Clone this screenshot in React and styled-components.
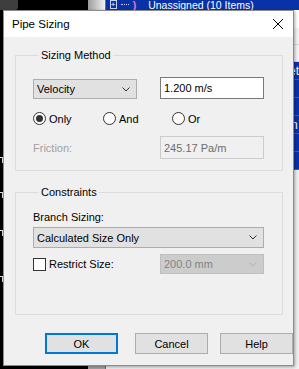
import styled, { createGlobalStyle } from "styled-components";

const GlobalStyle = createGlobalStyle`
  html, body {
    margin: 0;
    padding: 0;
    background: #000;
  }
  body {
    font-family: "Liberation Sans", Arial, sans-serif;
    font-size: 11px;
    color: #000;
  }
  * {
    box-sizing: border-box;
  }
`;

const Desktop = styled.div`
  position: relative;
  width: 299px;
  height: 369px;
  overflow: hidden;
  display: flex;
`;

/* ---------- app behind the dialog ---------- */

const LeftPane = styled.div`
  width: 119px;
  background: #000;
  display: flex;
  flex-direction: column;
`;

const CornerBlock = styled.div`
  width: 18px;
  height: 10px;
  background: #3e3e3e;
  border-bottom-right-radius: 3px;
`;

const TreeMark = styled.div`
  width: 3px;
  height: 6px;
  margin-top: ${(p) => p.$gap}px;
  border-top: 1px solid #e0e0e0;
  border-right: 1px solid #e0e0e0;
`;

const MidPane = styled.div`
  width: 23px;
  background: #a4a4a4;
  border-right: 1px solid #6c6c6c;
  display: flex;
  flex-direction: column;
`;

const MidTop = styled.div`
  height: 10px;
  background: linear-gradient(to right, #9c9c9c, #f2f2f2);
`;

const RightPane = styled.div`
  flex: 1;
  background: #f0f0f0;
  display: flex;
  flex-direction: column;
`;

const TopStrip = styled.div`
  height: 10px;
  background: #0a32a8;
  color: #fff;
  font-size: 10.5px;
  line-height: 10px;
  display: flex;
  align-items: flex-start;
  gap: 4px;
  padding-left: 4px;
  overflow: hidden;
  white-space: nowrap;
`;

const PlusBox = styled.span`
  width: 7px;
  height: 9px;
  border: 1px solid #c8d2f0;
  font-size: 8px;
  line-height: 7px;
  text-align: center;
`;

const Dots = styled.span`
  width: 8px;
  border-top: 1px dotted #c8d2f0;
  margin-top: 4px;
`;

const PinkMark = styled.span`
  color: #ff6ec8;
  font-weight: bold;
  margin-right: 8px;
`;

const WhiteGap = styled.div`
  height: 18px;
  background: #fff;
`;

const ListRow = styled.div`
  height: ${(p) => p.$h || 18}px;
  padding-left: 152px;
  font-size: 12px;
  line-height: ${(p) => p.$h || 18}px;
  white-space: nowrap;
  overflow: hidden;
  background: ${(p) => (p.$selected ? "#0a32a8" : "#f4f4f4")};
  color: ${(p) => (p.$selected ? "#fff" : "#000")};
  border-bottom: 1px solid ${(p) => (p.$selected ? "#3a5cc0" : "#d8d8d8")};
`;

/* ---------- dialog ---------- */

const Dialog = styled.div`
  position: absolute;
  left: 3px;
  top: 10px;
  width: 291px;
  height: 356px;
  border: 1px solid #8c8c8c;
  background: #f0f0f0;
  box-shadow: 1px 1px 3px rgba(0, 0, 0, 0.35);
  display: flex;
  flex-direction: column;
`;

const TitleBar = styled.div`
  height: 26px;
  background: #fff;
  display: flex;
  align-items: center;
  justify-content: space-between;
  padding: 0 10px 0 8px;
  font-size: 11.5px;
`;

const Body = styled.div`
  padding: 10px 10px 0 11px;
  display: flex;
  flex-direction: column;
`;

const Group = styled.fieldset`
  margin: ${(p) => (p.$spaced ? "13px 0 0" : "0")};
  border: 1px solid #dcdcdc;
  padding: ${(p) => p.$pad};
  min-width: 0;
`;

const Legend = styled.legend`
  padding: 0 2px;
  margin-left: 6px;
  line-height: 16px;
  font-size: 11px;
`;

const FieldRow = styled.div`
  display: grid;
  grid-template-columns: ${(p) => p.$cols};
  align-items: ${(p) => p.$align || "center"};
  height: ${(p) => p.$h}px;
  margin-top: ${(p) => p.$mt || 0}px;
`;

const Combo = styled.div`
  grid-column: ${(p) => p.$col || "auto"};
  height: ${(p) => p.$h || 21}px;
  background: ${(p) => (p.$disabled ? "#cccccc" : "#e1e1e1")};
  border: 1px solid ${(p) => (p.$disabled ? "#bfbfbf" : "#adadad")};
  color: ${(p) => (p.$disabled ? "#838383" : "#000")};
  display: flex;
  align-items: center;
  justify-content: space-between;
  padding: 0 6px 0 3px;
  font-size: 11px;
`;

const TextBox = styled.div`
  grid-column: 3;
  height: ${(p) => p.$h}px;
  background: ${(p) => (p.$disabled ? "#f0f0f0" : "#fff")};
  border: 1px solid ${(p) => (p.$disabled ? "#cccccc" : "#7a7a7a")};
  color: ${(p) => (p.$disabled ? "#6d6d6d" : "#000")};
  display: flex;
  align-items: center;
  padding-left: 3px;
  font-size: 11px;
`;

const Label = styled.span`
  color: ${(p) => (p.$disabled ? "#a0a0a0" : "#000")};
  font-size: 11px;
`;

const Option = styled.label`
  display: flex;
  align-items: center;
  gap: 3px;
  font-size: 11px;
`;

const RadioCircle = styled.span`
  width: 13px;
  height: 13px;
  border-radius: 50%;
  border: 1px solid #333;
  background: #fff;
  display: flex;
  align-items: center;
  justify-content: center;

  &::after {
    content: "";
    width: 7px;
    height: 7px;
    border-radius: 50%;
    background: #333;
    display: ${(p) => (p.$checked ? "block" : "none")};
  }
`;

const CheckSquare = styled.span`
  width: 13px;
  height: 13px;
  border: 1px solid #333;
  background: #fff;
`;

const ButtonRow = styled.div`
  display: grid;
  grid-template-columns: 90px 85px 73px;
  padding: 18px 0 0 30px;
`;

const Button = styled.div`
  width: 73px;
  height: 21px;
  background: #e1e1e1;
  border: ${(p) => (p.$default ? "2px solid #0078d7" : "1px solid #adadad")};
  display: flex;
  align-items: center;
  justify-content: center;
  font-size: 11px;
`;

function Chevron({ color = "#333" }) {
  return (
    <svg width="8" height="5" viewBox="0 0 8 5">
      <polyline points="0.5,0.5 4,4 7.5,0.5" fill="none" stroke={color} strokeWidth="1" />
    </svg>
  );
}

function CloseIcon() {
  return (
    <svg width="10" height="10" viewBox="0 0 10 10">
      <line x1="0" y1="0" x2="10" y2="10" stroke="#000" strokeWidth="1" />
      <line x1="10" y1="0" x2="0" y2="10" stroke="#000" strokeWidth="1" />
    </svg>
  );
}

const listRows = ["area", "duct"];
const blueRows = ["Cabinet", "Cooler", "nozzle", "Kitchen", "store", "store"];

export default function App() {
  return (
    <>
      <GlobalStyle />
      <Desktop>
        <LeftPane>
          <CornerBlock />
          <TreeMark $gap={147} />
          <TreeMark $gap={29} />
          <TreeMark $gap={32} />
          <TreeMark $gap={40} />
        </LeftPane>
        <MidPane>
          <MidTop />
        </MidPane>
        <RightPane>
          <TopStrip>
            <PlusBox>+</PlusBox>
            <Dots />
            <PinkMark>)</PinkMark>
            <span>Unassigned (10 Items)</span>
          </TopStrip>
          <WhiteGap />
          {listRows.map((t) => (
            <ListRow key={t} $h={17}>
              {t}
            </ListRow>
          ))}
          {blueRows.map((t, i) => (
            <ListRow key={i} $selected>
              {t}
            </ListRow>
          ))}
        </RightPane>

        <Dialog>
          <TitleBar>
            <span>Pipe Sizing</span>
            <CloseIcon />
          </TitleBar>
          <Body>
            <Group $pad="0 18px 11px 17px">
              <Legend>Sizing Method</Legend>
              <FieldRow $cols="104px 1fr 104px" $align="end" $h={22} $mt={14}>
                <Combo $h={20}>
                  Velocity
                  <Chevron />
                </Combo>
                <TextBox $h={22}>1.200 m/s</TextBox>
              </FieldRow>
              <FieldRow $cols="70px 69px auto" $h={13} $mt={13}>
                <Option>
                  <RadioCircle $checked />
                  Only
                </Option>
                <Option>
                  <RadioCircle />
                  And
                </Option>
                <Option>
                  <RadioCircle />
                  Or
                </Option>
              </FieldRow>
              <FieldRow $cols="104px 1fr 104px" $h={23} $mt={11}>
                <Label $disabled>Friction:</Label>
                <TextBox $h={23} $disabled>
                  245.17 Pa/m
                </TextBox>
              </FieldRow>
            </Group>

            <Group $spaced $pad="9px 18px 40px 17px">
              <Legend>Constraints</Legend>
              <FieldRow $cols="1fr" $h={16}>
                <Label>Branch Sizing:</Label>
              </FieldRow>
              <FieldRow $cols="1fr" $h={21} $mt={2}>
                <Combo>
                  Calculated Size Only
                  <Chevron />
                </Combo>
              </FieldRow>
              <FieldRow $cols="104px 1fr 104px" $h={20} $mt={6}>
                <Option>
                  <CheckSquare />
                  Restrict Size:
                </Option>
                <Combo $col={3} $h={20} $disabled>
                  200.0 mm
                  <Chevron color="#b0b0b0" />
                </Combo>
              </FieldRow>
            </Group>

            <ButtonRow>
              <Button $default>OK</Button>
              <Button>Cancel</Button>
              <Button>Help</Button>
            </ButtonRow>
          </Body>
        </Dialog>
      </Desktop>
    </>
  );
}
